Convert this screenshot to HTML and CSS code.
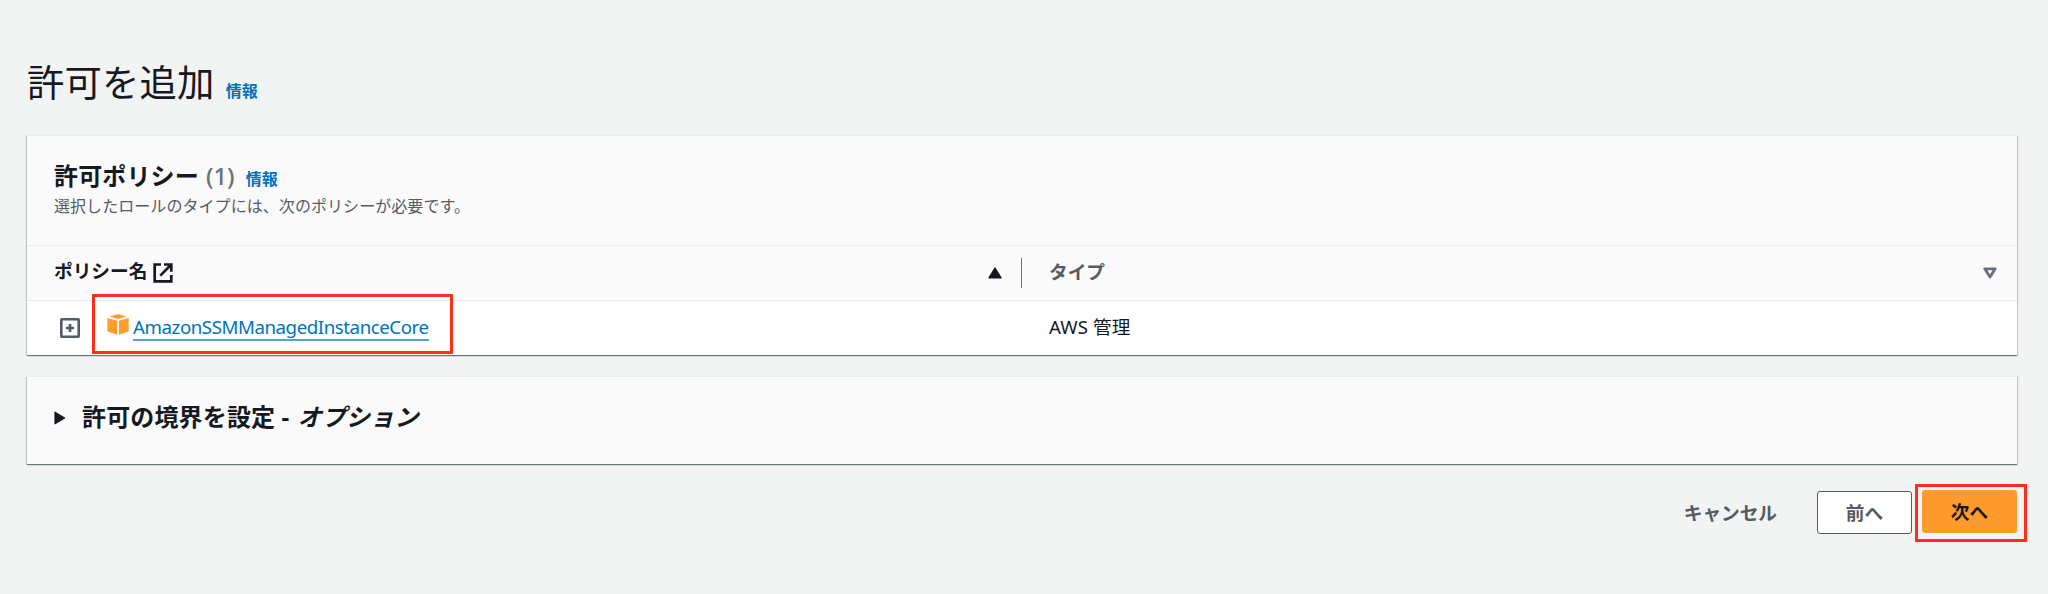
FILE: index.html
```
<!DOCTYPE html>
<html lang="ja">
<head>
    <meta charset="UTF-8">
    <meta name="viewport" content="width=device-width, initial-scale=1.0">
    <title>許可を追加</title>
    <link rel="stylesheet" href="styles.css">
</head>
<body>
    <main class="page">
        <header class="page-header">
            <h1>許可を追加</h1>
            <a href="#" class="info-link">情報</a>
        </header>

        <section class="card">
            <div class="card-header">
                <div class="card-title">
                    <h2>許可ポリシー</h2>
                    <span class="counter">(1)</span>
                    <a href="#" class="info-link">情報</a>
                </div>
                <p class="description">選択したロールのタイプには、次のポリシーが必要です。</p>
            </div>

            <div class="row table-head">
                <div class="cell name-cell">
                    <span class="label">ポリシー名</span>
                    <svg class="external-icon" viewBox="0 0 20 20" fill="none" stroke="#16191f" stroke-width="2.7">
                        <path d="M8 1.5H1.7v16.8h16.6V12"/>
                        <path d="M11 1.5h7.3v7.3M18 1.8L7.3 12.6"/>
                    </svg>
                    <svg class="sort-icon" viewBox="0 0 14 12">
                        <path d="M7 1.2L13 10.8H1z" fill="#16191f" stroke="#16191f" stroke-width="1.4" stroke-linejoin="round"/>
                    </svg>
                </div>
                <div class="cell type-cell">
                    <span class="label">タイプ</span>
                    <svg class="sort-icon" viewBox="0 0 14 12">
                        <path d="M1.8 1.8h10.4L7 10z" fill="none" stroke="#687078" stroke-width="2.8" stroke-linejoin="round"/>
                    </svg>
                </div>
            </div>

            <div class="row table-row">
                <div class="cell name-cell">
                    <svg class="expand-icon" viewBox="0 0 20 20" fill="none" stroke="#545b64">
                        <rect x="1.3" y="1.3" width="17.4" height="17.4" rx="0.5" stroke-width="2.6"/>
                        <path d="M10 6v8M6 10h8" stroke-width="2.6"/>
                    </svg>
                    <div class="policy">
                        <svg class="policy-icon" viewBox="0 0 22 21" fill="#ff9d2e">
                            <path d="M11 0l8.5 2.5L11 5 2.5 2.5z"/>
                            <path d="M.4 4l9.7 2.8v14L.4 17.4z"/>
                            <path d="M21.6 4l-9.7 2.8v14l9.7-3.4z"/>
                        </svg>
                        <a href="#" class="policy-link">AmazonSSMManagedInstanceCore</a>
                    </div>
                </div>
                <div class="cell type-cell"><span class="label">AWS 管理</span></div>
            </div>
        </section>

        <section class="card boundary">
            <svg class="caret-icon" viewBox="0 0 12 14">
                <path d="M1 1.2L10.6 7 1 12.8z" fill="#16191f" stroke="#16191f" stroke-width="1.2" stroke-linejoin="round"/>
            </svg>
            <h2>許可の境界を設定 - <em>オプション</em></h2>
        </section>

        <footer class="actions">
            <button type="button" class="btn btn-link">キャンセル</button>
            <button type="button" class="btn btn-normal">前へ</button>
            <div class="highlight">
                <button type="button" class="btn btn-primary">次へ</button>
            </div>
        </footer>
    </main>
</body>
</html>
```
FILE: styles.css
```
* {
    margin: 0;
    padding: 0;
    box-sizing: border-box;
}

body {
    font-family: "Noto Sans", "Noto Sans CJK JP", sans-serif;
    font-size: 18.67px;
    color: #16191f;
    background: #f2f3f3;
}

.page {
    padding: 56px 31px 0 27px;
}

.page-header {
    display: flex;
    align-items: baseline;
    gap: 11px;
    height: 79px;
}

h1 {
    font-size: 37.33px;
    font-weight: 400;
    line-height: 54px;
    letter-spacing: 0.2px;
}

h2 {
    font-size: 24px;
    font-weight: 700;
    line-height: 30px;
    letter-spacing: 0.15px;
}

.info-link {
    color: #0073bb;
    font-size: 16px;
    font-weight: 700;
    text-decoration: none;
}

.card {
    background: #fafafa;
    border-top: 1px solid #eaeded;
    box-shadow: 0 1px 1px 0 rgba(0, 28, 36, 0.4), 1px 1px 1px 0 rgba(0, 28, 36, 0.15), -1px 1px 1px 0 rgba(0, 28, 36, 0.15);
}

.card-header {
    height: 109px;
    padding: 25px 27px 0;
}

.card-title {
    display: flex;
    align-items: baseline;
}

.counter {
    margin: 0 11px 0 7px;
    color: #687078;
    font-size: 24px;
    font-weight: 500;
    line-height: 30px;
}

.description {
    margin-top: 3px;
    color: #545b64;
    font-size: 16px;
    line-height: 24px;
    letter-spacing: 0.06px;
}

.row {
    display: grid;
    grid-template-columns: 995px 1fr;
    height: 55px;
    border-top: 1px solid #eaeded;
}

.cell {
    display: flex;
    align-items: center;
    padding: 0 20px 0 27px;
}

.label {
    padding-bottom: 5px;
}

.table-head {
    font-weight: 700;
}

.table-head .name-cell {
    position: relative;
}

.table-head .name-cell .label {
    padding-bottom: 7px;
}

.table-head .name-cell::after {
    content: '';
    position: absolute;
    right: 0;
    top: 12px;
    width: 1px;
    height: 30px;
    background: #687078;
}

.table-head .type-cell {
    color: #545b64;
}

.external-icon {
    width: 20px;
    height: 20px;
    margin-left: 6px;
}

.sort-icon {
    width: 14px;
    height: 12px;
    margin-left: auto;
}

.table-row {
    background: #fff;
}

.table-row .name-cell {
    padding-left: 33px;
}

.table-row .type-cell {
    letter-spacing: 0.1px;
}

.expand-icon {
    width: 20px;
    height: 20px;
}

/* Marked policy */
.policy {
    display: flex;
    align-items: center;
    width: 361px;
    height: 60px;
    margin: -8px 0 0 12px;
    padding-left: 12px;
    border: 3px solid #ff2f1c;
}

.policy-icon {
    width: 22px;
    height: 21px;
    margin-top: 1px;
}

.policy-link {
    margin: 8px 0 0 4px;
    color: #0073bb;
    line-height: 24px;
    letter-spacing: -0.43px;
    text-decoration: none;
    border-bottom: 2px solid #5a9fd0;
}

.boundary {
    display: flex;
    gap: 16px;
    height: 88px;
    margin-top: 21px;
    padding: 25px 27px 0;
}

.boundary em {
    margin-left: 2px;
}

.caret-icon {
    width: 12px;
    height: 14px;
    margin-top: 9px;
}

.actions {
    display: flex;
    justify-content: flex-end;
    align-items: flex-start;
    height: 58px;
    margin: 20px -10px 0 0;
}

.btn {
    width: 95px;
    height: 43px;
    margin-top: 7px;
    padding-bottom: 3px;
    border: 1px solid transparent;
    border-radius: 3px;
    font: inherit;
    font-weight: 700;
    cursor: pointer;
}

.btn-link {
    width: auto;
    margin-right: 39px;
    color: #545b64;
    background: transparent;
}

.btn-normal {
    color: #545b64;
    background: #fff;
    border-color: #545b64;
}

.btn-primary {
    margin-top: 0;
    color: #16191f;
    background: #ff9a2e;
}

.highlight {
    width: 112px;
    height: 58px;
    margin-left: 3px;
    padding: 3px 4px;
    border: 3px solid #ff2f1c;
}
```
